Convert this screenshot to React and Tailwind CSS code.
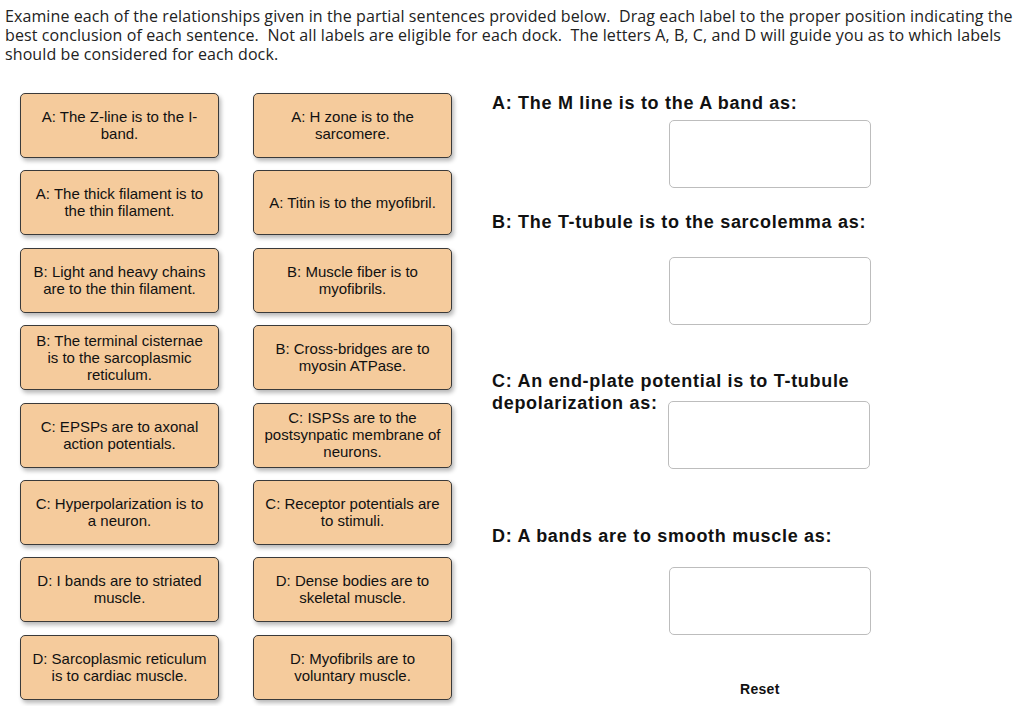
const labels = [
  [["A: The Z-line is to the I-", "band."], ["A: H zone is to the", "sarcomere."]],
  [["A: The thick filament is to", "the thin filament."], ["A: Titin is to the myofibril."]],
  [["B: Light and heavy chains", "are to the thin filament."], ["B: Muscle fiber is to", "myofibrils."]],
  [["B: The terminal cisternae", "is to the sarcoplasmic", "reticulum."], ["B: Cross-bridges are to", "myosin ATPase."]],
  [["C: EPSPs are to axonal", "action potentials."], ["C: ISPSs are to the", "postsynpatic membrane of", "neurons."]],
  [["C: Hyperpolarization is to", "a neuron."], ["C: Receptor potentials are", "to stimuli."]],
  [["D: I bands are to striated", "muscle."], ["D: Dense bodies are to", "skeletal muscle."]],
  [["D: Sarcoplasmic reticulum", "is to cardiac muscle."], ["D: Myofibrils are to", "voluntary muscle."]],
];

function Label({ lines }) {
  return (
    <div className="h-[65px] flex items-center justify-center rounded-[5px] border border-[#3a3a3a] bg-[#f5cb9c] shadow-[2px_3px_4px_rgba(0,0,0,0.28)] text-center text-[15px] leading-[17px] text-[#111]">
      <div className="-mt-[1px]">
        {lines.map((l, i) => (
          <div key={i} className="whitespace-nowrap">{l}</div>
        ))}
      </div>
    </div>
  );
}

function Dock({ className = "" }) {
  return <div className={"w-[202px] h-[68px] rounded-[5px] border border-[#bdbdbd] bg-white " + className} />;
}

export default function App() {
  return (
    <div className="w-[1024px] h-[706px] overflow-hidden bg-white font-[family-name:'Liberation_Sans',Arial,sans-serif]">
      <div className="pl-[5px] pt-[7px] text-[16px] leading-[19px] tracking-[0.1px] text-[#222] whitespace-pre font-[family-name:'Open_Sans',sans-serif]">
        <div>Examine each of the relationships given in the partial sentences provided below.  Drag each label to the proper position indicating the</div>
        <div>best conclusion of each sentence.  Not all labels are eligible for each dock.  The letters A, B, C, and D will guide you as to which labels</div>
        <div>should be considered for each dock.</div>
      </div>

      <div className="flex mt-[29px]">
        <div className="ml-[20px] grid grid-cols-[199px_199px] gap-x-[34px] gap-y-[12.4px]">
          {labels.map((row, r) =>
            row.map((lines, c) => <Label key={r + "-" + c} lines={lines} />)
          )}
        </div>

        <div className="ml-[40px] flex flex-col text-[18px] leading-[21px] tracking-[0.7px] font-bold text-[#111]">
          <div>A: The M line is to the A band as:</div>
          <Dock className="ml-[177px] mt-[6px]" />

          <div className="mt-[24px]">B: The T-tubule is to the sarcolemma as:</div>
          <Dock className="ml-[177px] mt-[24px]" />

          <div className="mt-[45px] leading-[22px]">
            C: An end-plate potential is to T-tubule
            <br />
            depolarization as:
          </div>
          <Dock className="ml-[176px] -mt-[13px]" />

          <div className="mt-[57px]">D: A bands are to smooth muscle as:</div>
          <Dock className="ml-[177px] mt-[20px]" />

          <div className="mt-[46px] ml-[248px] text-[14px] leading-[17px] tracking-[0.3px]">Reset</div>
        </div>
      </div>
    </div>
  );
}
